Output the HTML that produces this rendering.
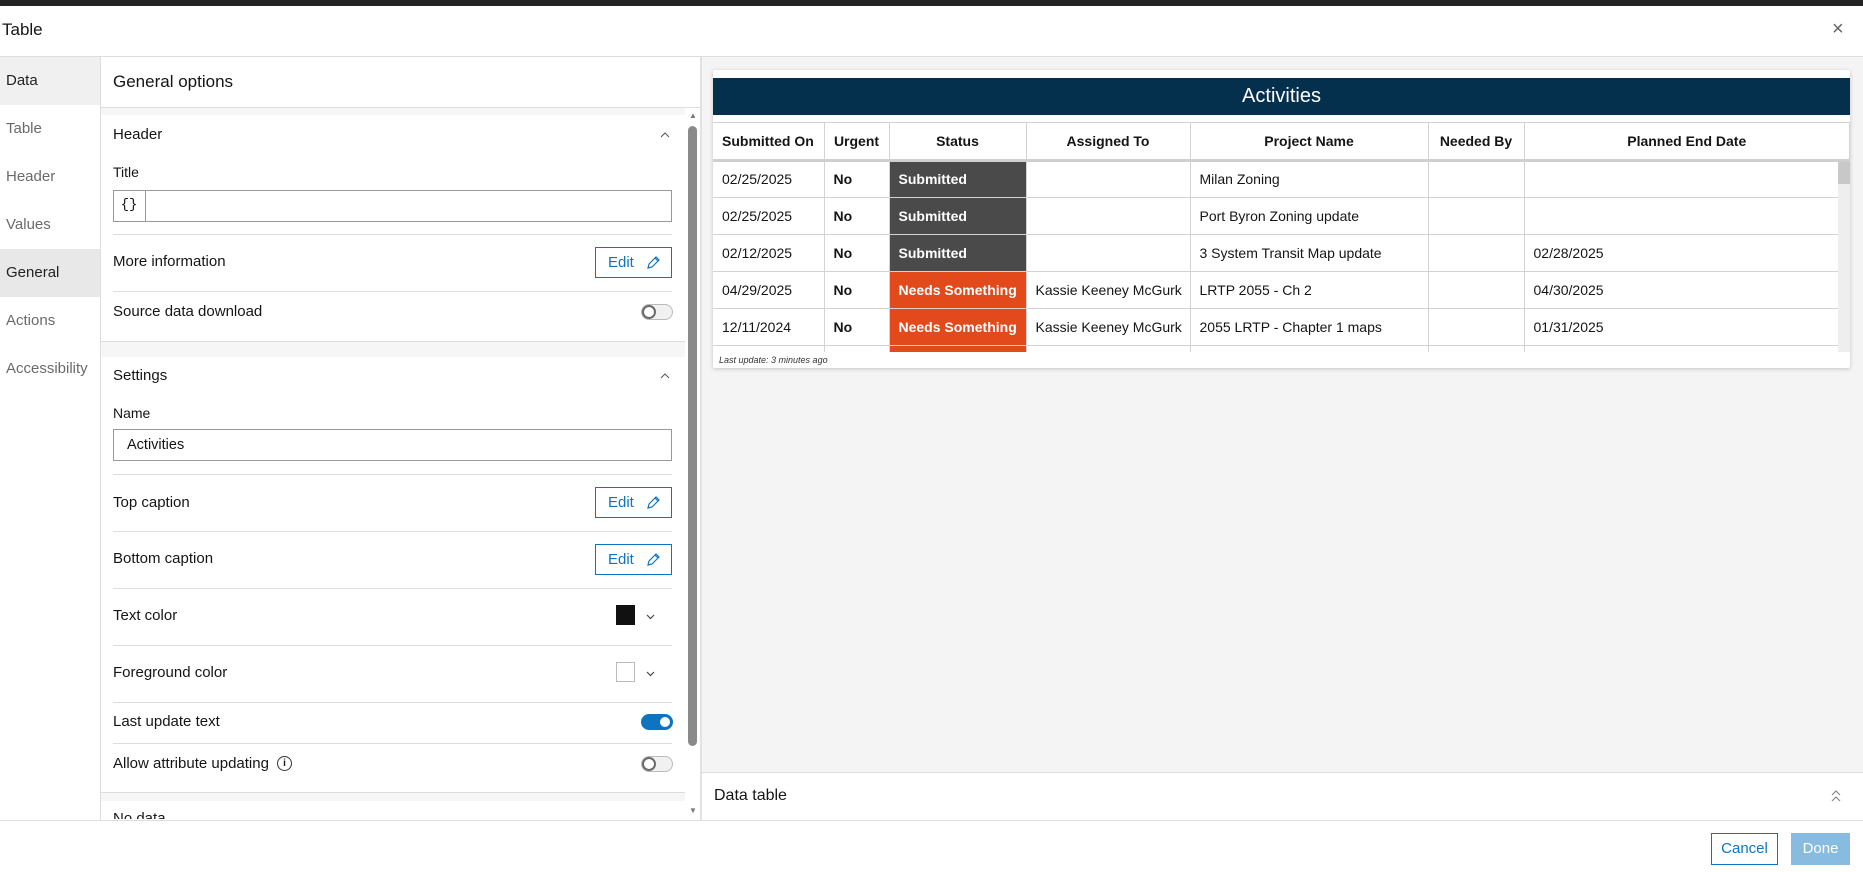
<!DOCTYPE html>
<html><head><meta charset="utf-8"><style>
*{box-sizing:border-box;margin:0;padding:0}
body{width:1863px;height:872px;overflow:hidden;background:#fff;font-family:"Liberation Sans",sans-serif;color:#151515;position:relative;font-size:15px}
.a{position:absolute}
.nav div{position:absolute;left:0;width:100px;height:48px;line-height:48px;padding-left:6px;font-size:15px;color:#6a6a6a}
.lbl{position:absolute;left:113px;font-size:15px;color:#151515}
.div{position:absolute;left:113px;width:559px;height:1px;background:#ddd}
.edit{position:absolute;left:595px;width:77px;height:31px;border:1px solid #0f74bf;color:#0f74bf;font-size:15px;line-height:29px;padding-left:12px}
.edit svg{position:absolute;right:10px;top:7px}
.tog{position:absolute;left:641px;width:32px;height:16px;border-radius:8px;border:1px solid #bbb;background:#f1f1f1}
.tog::after{content:"";position:absolute;left:0;top:0;width:14px;height:14px;border-radius:50%;border:2px solid #6a6a6a;background:#fff;box-sizing:border-box}
.tog.on{background:#0f74bf;border-color:#0f74bf}
.tog.on::after{left:16px;border-color:#0f74bf}
.chev{position:absolute;left:660px}
table{border-collapse:collapse;table-layout:fixed;font-size:14px}
td,th{border-right:1px solid #d3d3d3;border-bottom:1px solid #d3d3d3;height:37px;padding:0 9px;white-space:nowrap;overflow:hidden}
th{font-weight:bold;text-align:center;height:37px}
td.s{background:#4a4a4a;color:#fff;font-weight:bold}
td.n{background:#e34a1b;color:#fff;font-weight:bold}
</style></head><body>
<div class="a" style="left:0;top:0;width:1863px;height:6px;background:#222"></div>
<div class="a" style="left:2px;top:20px;font-size:17px">Table</div>
<div class="a" style="left:1832px;top:18px;font-size:20px;color:#666">×</div>
<div class="a" style="left:0;top:56px;width:1863px;height:1px;background:#ddd"></div>
<div class="nav">
<div style="top:57px;background:#f0f0f0;color:#222">Data</div>
<div style="top:105px">Table</div>
<div style="top:153px">Header</div>
<div style="top:201px">Values</div>
<div style="top:249px;background:#e8e8e8;color:#222">General</div>
<div style="top:297px">Actions</div>
<div style="top:345px">Accessibility</div>
</div>
<div class="a" style="left:100px;top:57px;width:1px;height:763px;background:#ddd"></div>
<div class="a" style="left:113px;top:72px;font-size:17px">General options</div>
<div class="a" style="left:100px;top:107px;width:600px;height:1px;background:#ddd"></div>
<div class="a" style="left:101px;top:108px;width:584px;height:7px;background:#f6f6f6"></div>
<div class="lbl" style="top:126px">Header</div><svg class="chev" style="top:132px" width="10" height="6"><path d="M1 5l4-4 4 4" fill="none" stroke="#555" stroke-width="1"/></svg>
<div class="lbl" style="top:164px;font-size:14px">Title</div>
<div class="a" style="left:113px;top:190px;width:559px;height:32px;border:1px solid #999"></div>
<div class="a" style="left:113px;top:190px;width:33px;height:32px;border-right:1px solid #999;text-align:center;line-height:31px;font-size:14px;font-family:'Liberation Mono',monospace">{}</div>
<div class="div" style="top:234px"></div>
<div class="lbl" style="top:253px">More information</div>
<div class="edit" style="top:247px">Edit<svg width="16" height="16" viewBox="0 0 16 16"><path d="M3 13l1-4 7-7 3 3-7 7z M10 3l3 3" fill="none" stroke="#0f74bf" stroke-width="1.2"/></svg></div>
<div class="div" style="top:291px"></div>
<div class="lbl" style="top:303px">Source data download</div><div class="tog" style="top:304px"></div>
<div class="a" style="left:101px;top:341px;width:584px;height:1px;background:#ddd"></div>
<div class="a" style="left:101px;top:342px;width:584px;height:15px;background:#f6f6f6"></div>
<div class="lbl" style="top:367px">Settings</div><svg class="chev" style="top:373px" width="10" height="6"><path d="M1 5l4-4 4 4" fill="none" stroke="#555" stroke-width="1"/></svg>
<div class="lbl" style="top:405px;font-size:14px">Name</div>
<div class="a" style="left:113px;top:429px;width:559px;height:32px;border:1px solid #999;padding-left:13px;line-height:30px;font-size:14.5px">Activities</div>
<div class="div" style="top:474px"></div>
<div class="lbl" style="top:494px">Top caption</div>
<div class="edit" style="top:487px">Edit<svg width="16" height="16" viewBox="0 0 16 16"><path d="M3 13l1-4 7-7 3 3-7 7z M10 3l3 3" fill="none" stroke="#0f74bf" stroke-width="1.2"/></svg></div>
<div class="div" style="top:531px"></div>
<div class="lbl" style="top:550px">Bottom caption</div>
<div class="edit" style="top:544px">Edit<svg width="16" height="16" viewBox="0 0 16 16"><path d="M3 13l1-4 7-7 3 3-7 7z M10 3l3 3" fill="none" stroke="#0f74bf" stroke-width="1.2"/></svg></div>
<div class="div" style="top:588px"></div>
<div class="lbl" style="top:607px">Text color</div>
<div class="a" style="left:616px;top:605px;width:19px;height:20px;background:#111"></div>
<svg class="a" style="left:646px;top:614px" width="9" height="6"><path d="M1 1l3.5 3.5L8 1" fill="none" stroke="#444" stroke-width="1.2"/></svg>
<div class="div" style="top:645px"></div>
<div class="lbl" style="top:664px">Foreground color</div>
<div class="a" style="left:616px;top:662px;width:19px;height:20px;border:1px solid #bbb;background:#fff"></div>
<svg class="a" style="left:646px;top:671px" width="9" height="6"><path d="M1 1l3.5 3.5L8 1" fill="none" stroke="#444" stroke-width="1.2"/></svg>
<div class="div" style="top:702px"></div>
<div class="lbl" style="top:713px">Last update text</div><div class="tog on" style="top:714px"></div>
<div class="div" style="top:743px"></div>
<div class="lbl" style="top:755px">Allow attribute updating</div>
<div class="a" style="left:277px;top:756px;width:15px;height:15px;border:1.3px solid #333;border-radius:50%;font-size:10px;text-align:center;line-height:13px;font-weight:bold">i</div>
<div class="tog" style="top:756px"></div>
<div class="a" style="left:101px;top:792px;width:584px;height:1px;background:#ddd"></div>
<div class="a" style="left:101px;top:793px;width:584px;height:8px;background:#f6f6f6"></div>
<div class="lbl" style="top:810px;height:9px;overflow:hidden">No data</div>
<div class="a" style="left:689px;top:111px;font-size:8px;color:#777">▲</div>
<div class="a" style="left:688px;top:126px;width:9px;height:620px;background:#8a8a8a;border-radius:5px"></div>
<div class="a" style="left:689px;top:806px;font-size:8px;color:#777">▼</div>
<div class="a" style="left:700px;top:57px;width:1163px;height:763px;background:#f4f4f4;border-left:2px solid #e2e2e2"></div>
<div class="a" style="left:713px;top:70px;width:1137px;height:298px;background:#fff;box-shadow:0 1px 4px rgba(0,0,0,.2);border-radius:2px;overflow:hidden">
 <div class="a" style="left:0;top:8px;width:1137px;height:37px;background:#05304d;color:#fff;text-align:center;font-size:20px;line-height:37px">Activities</div>
 <div class="a" style="left:0;top:52px;width:1137px;height:1px;background:#d3d3d3"></div>
 <table class="a" style="left:0;top:53px;width:1137px">
 <colgroup><col style="width:111px"><col style="width:65px"><col style="width:137px"><col style="width:164px"><col style="width:238px"><col style="width:96px"><col></colgroup>
 <tr><th style="text-align:left;border-bottom:3px solid #cfcfcf">Submitted On</th><th style="border-bottom:3px solid #cfcfcf">Urgent</th><th style="border-bottom:3px solid #cfcfcf">Status</th><th style="border-bottom:3px solid #cfcfcf">Assigned To</th><th style="border-bottom:3px solid #cfcfcf">Project Name</th><th style="border-bottom:3px solid #cfcfcf">Needed By</th><th style="border-bottom:3px solid #cfcfcf">Planned End Date</th></tr>
 <tr><td>02/25/2025</td><td><b>No</b></td><td class="s">Submitted</td><td></td><td>Milan Zoning</td><td></td><td></td></tr>
 <tr><td>02/25/2025</td><td><b>No</b></td><td class="s">Submitted</td><td></td><td>Port Byron Zoning update</td><td></td><td></td></tr>
 <tr><td>02/12/2025</td><td><b>No</b></td><td class="s">Submitted</td><td></td><td>3 System Transit Map update</td><td></td><td>02/28/2025</td></tr>
 <tr><td>04/29/2025</td><td><b>No</b></td><td class="n">Needs Something</td><td>Kassie Keeney McGurk</td><td>LRTP 2055 - Ch 2</td><td></td><td>04/30/2025</td></tr>
 <tr><td>12/11/2024</td><td><b>No</b></td><td class="n">Needs Something</td><td>Kassie Keeney McGurk</td><td>2055 LRTP - Chapter 1 maps</td><td></td><td>01/31/2025</td></tr>
 <tr><td></td><td></td><td class="n"></td><td></td><td></td><td></td><td></td></tr>
 </table>
 <div class="a" style="left:1125px;top:92px;width:12px;height:190px;background:#eee"></div>
 <div class="a" style="left:1125px;top:92px;width:12px;height:22px;background:#c8c8c8"></div>
 <div class="a" style="left:0;top:282px;width:1137px;height:16px;background:#fff"></div>
 <div class="a" style="left:6px;top:285px;font-size:9px;font-style:italic;color:#333">Last update: 3 minutes ago</div>
</div>
<div class="a" style="left:700px;top:772px;width:1163px;height:1px;background:#ddd"></div>
<div class="a" style="left:702px;top:773px;width:1161px;height:47px;background:#fff"></div>
<div class="a" style="left:714px;top:787px;font-size:16px">Data table</div>
<svg class="a" style="left:1831px;top:790px" width="10" height="12"><path d="M1 5l4-4 4 4M1 11l4-4 4 4" fill="none" stroke="#888" stroke-width="1.2"/></svg>
<div class="a" style="left:0;top:820px;width:1863px;height:1px;background:#ddd"></div>
<div class="a" style="left:1711px;top:833px;width:67px;height:32px;border:1px solid #0f74bf;color:#0f74bf;text-align:center;line-height:30px;font-size:15px">Cancel</div>
<div class="a" style="left:1791px;top:833px;width:59px;height:32px;background:#88bbe0;color:#fff;text-align:center;line-height:32px;font-size:15px">Done</div>
</body></html>
